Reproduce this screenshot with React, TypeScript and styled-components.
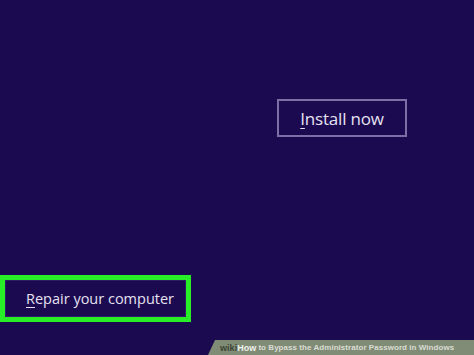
import styled, { createGlobalStyle } from "styled-components";

const GlobalStyle = createGlobalStyle`
  html, body {
    margin: 0;
    padding: 0;
    background: #1c0a50;
  }
`;

export default function App() {
  return (
    <>
      <GlobalStyle />
      <Screen>
        <TopRow>
          <SetupButton>
            <u>I</u>nstall now
          </SetupButton>
        </TopRow>
        <BottomRow>
          <Highlight>
            <RepairLink>
              <u>R</u>epair your computer
            </RepairLink>
          </Highlight>
        </BottomRow>
        <Watermark>
          <Wiki>wiki</Wiki>
          <How>How</How> to Bypass the Administrator Password in Windows
        </Watermark>
      </Screen>
    </>
  );
}

const Screen = styled.div`
  position: relative;
  width: 474px;
  height: 355px;
  overflow: hidden;
  background: #1c0a50;
  display: flex;
  flex-direction: column;
  font-family: "Open Sans", "DejaVu Sans", sans-serif;
`;

const TopRow = styled.div`
  display: flex;
  padding: 99px 0 0 277px;
`;

const SetupButton = styled.div`
  box-sizing: border-box;
  width: 130px;
  height: 38px;
  border: 2px solid #7c6fa6;
  display: flex;
  align-items: center;
  justify-content: center;
  color: #e6e2f2;
  font-size: 17px;
  letter-spacing: -0.2px;

  u {
    text-decoration-thickness: 1px;
    text-underline-offset: 3px;
  }
`;

const BottomRow = styled.div`
  display: flex;
  margin-top: auto;
  margin-bottom: 33px;
`;

const Highlight = styled.div`
  box-sizing: border-box;
  width: 191px;
  height: 47px;
  border: 5px solid #27ee27;
  display: flex;
  align-items: center;
`;

const RepairLink = styled.div`
  box-sizing: border-box;
  flex: 1;
  height: 100%;
  border: 1px solid #2e1d66;
  display: flex;
  align-items: center;
  padding-left: 20px;
  color: #e6e2f2;
  font-size: 14.5px;

  u {
    text-decoration-thickness: 1px;
    text-underline-offset: 3px;
  }
`;

const Watermark = styled.div`
  position: absolute;
  right: 0;
  bottom: 0;
  width: 266px;
  height: 15px;
  box-sizing: border-box;
  padding-left: 12px;
  background: #818c77;
  clip-path: polygon(7px 0, 100% 0, 100% 100%, 0 100%);
  display: flex;
  align-items: center;
  white-space: nowrap;
  font-family: "Liberation Sans", Arial, sans-serif;
  font-weight: bold;
  font-size: 8px;
  letter-spacing: 0.05px;
  color: #d9ddd2;
`;

const Wiki = styled.span`
  color: #3c4634;
  font-size: 9px;
`;

const How = styled.span`
  color: #eef0ea;
  font-size: 9px;
  margin-right: 2px;
`;
